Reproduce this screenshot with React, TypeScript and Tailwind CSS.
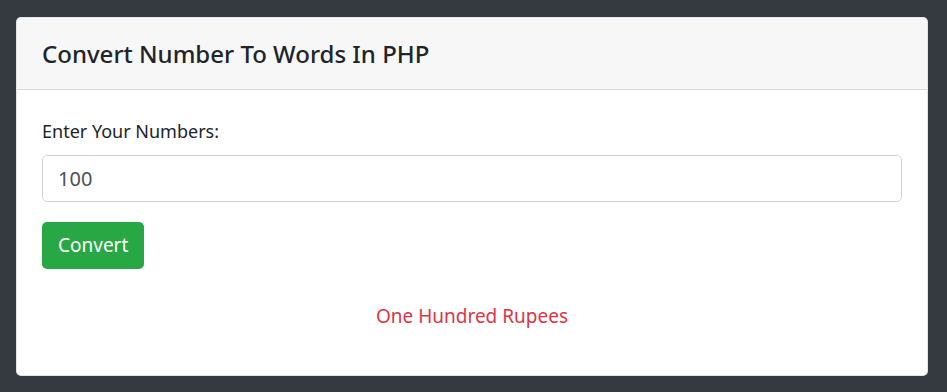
export default function App() {
  return (
    <div className="min-h-screen bg-[#343a40] pl-4 pr-[19px] pt-[17px] pb-4 font-['Noto_Sans',sans-serif]">
      <div className="w-[912px] overflow-hidden rounded-[5px] border border-black/10 bg-white">
        <div className="flex h-[72px] items-center border-b border-[#dadada] bg-[#f7f7f7] px-[25px]">
          <h4 className="text-[24px] font-medium leading-[29px] text-[#212529]">Convert Number To Words In PHP</h4>
        </div>
        <div className="px-[25px] pt-[28px] pb-[44px]">
          <label className="mb-[10px] block text-[18px] leading-[27px] text-[#212529]">Enter Your Numbers:</label>
          <input
            type="text"
            defaultValue="100"
            className="block h-[47px] w-full rounded-[5px] border border-[#ced4da] px-[15px] text-[20px] text-[#495057] outline-none"
          />
          <button className="mt-[20px] h-[47px] rounded-[5px] bg-[#28a745] px-4 text-[19px] text-white">Convert</button>
          <p className="mt-[32px] text-center text-[19px] leading-[30px] text-[#dc3545]">One Hundred Rupees</p>
        </div>
      </div>
    </div>
  )
}
